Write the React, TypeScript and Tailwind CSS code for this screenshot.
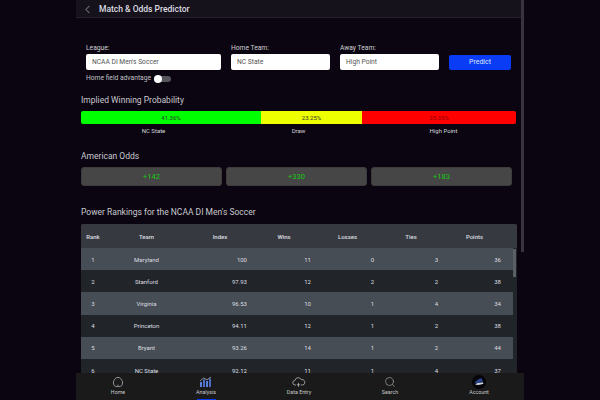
import { ChevronLeft, Search } from 'lucide-react';

const rows = [
  ['1', 'Maryland', '100', '11', '0', '3', '36'],
  ['2', 'Stanford', '97.93', '12', '2', '2', '38'],
  ['3', 'Virginia', '96.53', '10', '1', '4', '34'],
  ['4', 'Princeton', '94.11', '12', '1', '2', '38'],
  ['5', 'Bryant', '93.26', '14', '1', '2', '44'],
  ['6', 'NC State', '92.12', '11', '1', '4', '37'],
];

const headers = ['Rank', 'Team', 'Index', 'Wins', 'Losses', 'Ties', 'Points'];
const cols = 'grid grid-cols-[24px_83px_64px_64px_63px_64px_63px] items-center';

function Field({ label, value, width }: { label: string; value: string; width: string }) {
  return (
    <div className={`flex flex-col ${width}`}>
      <label className="text-[6.7px] leading-[9px] text-[#cfcfd4] mb-[1px]">{label}</label>
      <div className="h-[16px] bg-white rounded-[2px] flex items-center pl-[6px] text-[6.7px] text-[#555]">{value}</div>
    </div>
  );
}

function HomeIcon() {
  return (
    <svg width="12" height="12" viewBox="0 0 12 12" fill="none" stroke="#b5b5b5" strokeWidth="0.8">
      <path d="M2 4.6C2.8 2.6 4.2 1.4 6 1.4s3.2 1.2 4 3.2c.8 1.5.8 3.4-.1 4.7-.8 1-2.2 1.3-3.9 1.3s-3.1-.3-3.9-1.3C1.2 8 1.2 6.1 2 4.6Z" />
      <path d="M5.4 9.2h1.2" />
    </svg>
  );
}

function AnalysisIcon() {
  return (
    <svg width="14" height="12" viewBox="0 0 14 12">
      <rect x="1" y="6" width="2" height="5" fill="#5b7fd6" />
      <rect x="4" y="3.5" width="2" height="7.5" fill="#4a6cc4" />
      <rect x="7" y="5" width="2" height="6" fill="#5b7fd6" />
      <rect x="10" y="2.5" width="2" height="8.5" fill="#4a6cc4" />
      <path d="M1 5 4.5 2 8 3.8 12 1" fill="none" stroke="#b9c2d4" strokeWidth="0.7" />
    </svg>
  );
}

function CloudIcon() {
  return (
    <svg width="14" height="12" viewBox="0 0 14 12" fill="none" stroke="#b5b5b5" strokeWidth="0.8">
      <path d="M4 9H3.2A2.3 2.3 0 0 1 3 4.4 3.2 3.2 0 0 1 9.1 3.6 2.7 2.7 0 0 1 10.8 9H9" />
      <path d="M6.5 6.8v4M4.8 8.8h3.4" />
    </svg>
  );
}

function AccountIcon() {
  return (
    <svg width="14" height="14" viewBox="0 0 14 14">
      <circle cx="7" cy="7" r="7" fill="#05050a" />
      <path d="M2.5 8.5C4 5.5 6.5 3.5 9.5 3.2l1.5 3-4 2Z" fill="#2b4590" />
      <path d="M3 9.6c1.5-1.4 3-1.8 4.5-1.6l3.5-.8.4 1.6c-2.6 1.2-5.6 1.4-8.4.8Z" fill="#d5d8e0" />
    </svg>
  );
}

const nav = [
  { label: 'Home', icon: <HomeIcon /> },
  { label: 'Analysis', icon: <AnalysisIcon />, active: true },
  { label: 'Data Entry', icon: <CloudIcon /> },
  { label: 'Search', icon: <Search size={12} strokeWidth={1.2} color="#b5b5b5" /> },
  { label: 'Account', icon: <AccountIcon /> },
];

export default function App() {
  return (
    <div className="relative w-[600px] h-[400px] overflow-hidden bg-[#0a0510] font-['Roboto',sans-serif]">
      <div className="ml-[76px] w-[446px]">
        {/* Header */}
        <div className="h-[18px] bg-[#16121c] border-b border-[#25222b] flex items-center pl-[5px] pt-[1px]">
          <ChevronLeft size={13} strokeWidth={1.3} color="#c8c8c8" />
          <span className="ml-[5px] text-[8.5px] font-medium text-[#dcdce0]">Match &amp; Odds Predictor</span>
        </div>

        <div className="pl-[5px] pr-[5px]">
          {/* Form */}
          <div className="pl-[5px] mt-[26px] flex items-end gap-[10px]">
            <Field label="League:" value="NCAA DI Men's Soccer" width="w-[135px]" />
            <Field label="Home Team:" value="NC State" width="w-[99px]" />
            <Field label="Away Team:" value="High Point" width="w-[99px]" />
            <button className="w-[62px] h-[15.5px] bg-[#0a3cf5] rounded-[2px] text-[7px] text-[#dfe6ff]">Predict</button>
          </div>
          <div className="pl-[5px] mt-[4px] flex items-center h-[9px]">
            <span className="text-[6.7px] text-[#c0c0c5]">Home field advantage</span>
            <div className="relative ml-[3px] w-[17px] h-[6px] rounded-full bg-[#55555c]">
              <div className="absolute left-0 top-[-1px] w-[8px] h-[8px] rounded-full bg-white" />
            </div>
          </div>

          {/* Probability */}
          <h2 className="mt-[11px] text-[8.5px] leading-[12px] text-[#c9c9cf]">Implied Winning Probability</h2>
          <div className="mt-[5px] w-[435px] h-[13px] flex rounded-[2px] overflow-hidden text-[6px] text-[#333]">
            <div className="w-[180px] bg-[#00ff00] flex items-center justify-center">41.36%</div>
            <div className="w-[101px] bg-[#eeff00] flex items-center justify-center">23.25%</div>
            <div className="flex-1 bg-[#ff0000] flex items-center justify-center text-[#8a0000]">35.35%</div>
          </div>
          <div className="mt-[2px] w-[435.5px] flex text-[6px] leading-[9px] text-[#d4d4d8]">
            <div className="w-[145px] text-center">NC State</div>
            <div className="w-[145px] text-center">Draw</div>
            <div className="w-[145px] text-center">High Point</div>
          </div>

          {/* Odds */}
          <h2 className="mt-[15px] text-[8.5px] leading-[12px] text-[#c9c9cf]">American Odds</h2>
          <div className="mt-[5px] flex gap-[4px]">
            {['+142', '+330', '+183'].map((odd) => (
              <div key={odd} className="w-[141px] h-[19px] rounded-[3px] bg-[#464646] border border-[#3c3c3c] flex items-center justify-center text-[7.5px] text-[#14cc14]">
                {odd}
              </div>
            ))}
          </div>

          {/* Rankings */}
          <h2 className="mt-[20px] text-[8.5px] leading-[12px] text-[#c9c9cf]">Power Rankings for the NCAA DI Men's Soccer</h2>
          <div className="mt-[6px] w-[435.5px] h-[180px] rounded-t-[2px] overflow-hidden bg-[#212529] text-[6px] text-[#dcdee1]">
            <div className={`${cols} h-[24px] bg-[#363a40] font-medium`}>
              {headers.map((h) => (
                <div key={h} className="text-center">{h}</div>
              ))}
            </div>
            <div className="w-[432px]">
              {rows.map((r, i) => (
                <div key={r[0]} className={`${cols} h-[22.2px] ${i % 2 === 0 ? 'bg-[#474d54]' : 'bg-[#212529]'}`}>
                  {r.map((cell, j) => (
                    <div key={j} className={j < 2 ? 'text-center' : 'text-right pr-[5px]'}>{cell}</div>
                  ))}
                </div>
              ))}
            </div>
          </div>
        </div>
      </div>

      {/* Page scrollbar */}
      <div className="absolute left-[521px] top-0 w-[3px] h-[252px] bg-[#37343d]" />
      {/* Table scrollbar */}
      <div className="absolute left-[513px] top-[249px] w-[3px] h-[28px] bg-[#5a5f66]" />

      {/* Bottom nav */}
      <div className="absolute left-[76px] top-[373px] w-[448px] h-[27px] bg-[#1a1a1a] grid grid-cols-[84px_92px_94px_88px_90px]">
        {nav.map((item) => (
          <div key={item.label} className="relative flex flex-col items-center pt-[2px]">
            <div className="h-[14px] flex items-center justify-center">{item.icon}</div>
            <span className="text-[5.3px] leading-[6px] text-[#c8c8c8]">{item.label}</span>
            {item.active && <div className="absolute bottom-0 w-[19px] h-[1.5px] bg-[#0a3cf5]" />}
          </div>
        ))}
      </div>
    </div>
  );
}
